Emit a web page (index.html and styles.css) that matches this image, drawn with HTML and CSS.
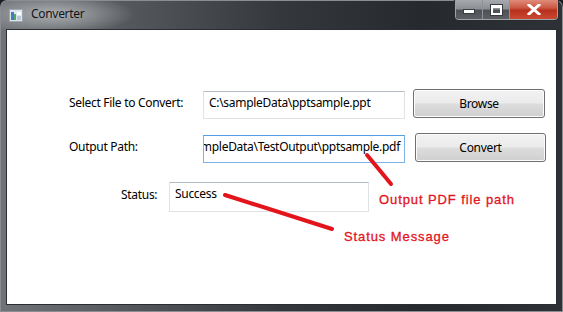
FILE: index.html
```html
<!DOCTYPE html>
<html>
<head>
<meta charset="utf-8">
<link rel="stylesheet" href="styles.css">
</head>
<body>
<div class="window">
  <div class="titlebar">
    <svg class="app-icon" width="14" height="13" viewBox="0 0 14 13">
      <rect x="0.5" y="0.5" width="13" height="12" fill="#dfe6ee" stroke="#9aa6b2"/>
      <rect x="2" y="3" width="3" height="8" fill="#3f7fb5"/>
      <rect x="5" y="5" width="2" height="6" fill="#5aa36a"/>
      <rect x="8" y="3" width="4" height="3" fill="#ffffff"/>
      <rect x="8" y="7" width="4" height="4" fill="#b9c7d6"/>
    </svg>
    <span class="title">Converter</span>
    <div class="caption-buttons">
      <div class="cap-btn cap-min"><span class="glyph-min"></span></div>
      <div class="cap-btn cap-max"><span class="glyph-max"></span></div>
      <div class="cap-btn cap-close">
        <svg width="14" height="11" viewBox="0 0 14 11"><path d="M2 1 L12 10 M12 1 L2 10" stroke="#ffffff" stroke-width="3" stroke-linecap="square"/></svg>
      </div>
    </div>
  </div>
  <div class="client">
    <div class="row row-file">
      <span class="label label-wide">Select File to Convert:</span>
      <div class="textbox tb-file"><span class="tb-text">C:\sampleData\pptsample.ppt</span></div>
      <div class="button btn-browse">Browse</div>
    </div>
    <div class="row row-out">
      <span class="label label-wide">Output Path:</span>
      <div class="textbox tb-out focused"><span class="tb-text">C:\sampleData\TestOutput\pptsample.pdf</span></div>
      <div class="button btn-convert">Convert</div>
    </div>
    <div class="row row-status">
      <span class="label label-status">Status:</span>
      <div class="textbox tb-status"><span class="tb-text">Success</span></div>
    </div>

    <svg class="annot-lines" width="549" height="274" viewBox="7 30 549 274">
      <path d="M368 156 L392 185" stroke="#e3141c" stroke-width="4" stroke-linecap="round"/>
      <path d="M226 196 L333 230" stroke="#e3141c" stroke-width="4" stroke-linecap="round"/>
    </svg>
    <span class="annot annot-pdf">Output PDF file path</span>
    <span class="annot annot-status">Status Message</span>
  </div>
</div>
</body>
</html>
```

FILE: styles.css
```css
html, body {
  margin: 0;
  padding: 0;
  background: #1c1f22;
}

body {
  width: 563px;
  height: 312px;
  overflow: hidden;
  font-family: "Noto Sans", "Open Sans", sans-serif;
}

.window {
  width: 563px;
  height: 312px;
  box-sizing: border-box;
  padding: 0 6px 7px 6px;
  display: flex;
  flex-direction: column;
  border-radius: 7px 7px 0 0;
  background:
    radial-gradient(ellipse 80px 20px at 55px 14px, rgba(200,202,204,0.75), rgba(200,202,204,0) 100%),
    linear-gradient(90deg, #707478 0%, #55595d 22%, #34383c 50%, #262a2e 75%, #2e3236 100%);
  box-shadow: inset 0 0 0 1px #8a8e92;
}

.titlebar {
  height: 29px;
  flex: none;
  display: flex;
  align-items: flex-start;
  position: relative;
}

.app-icon {
  margin: 9px 0 0 3px;
  flex: none;
}

.title {
  margin: 6px 0 0 8px;
  font-size: 12px;
  line-height: 16px;
  letter-spacing: -0.3px;
  color: #101418;
  font-family: "Noto Sans", sans-serif;
}

.caption-buttons {
  position: absolute;
  top: 0;
  right: -1px;
  display: flex;
  height: 19px;
  border: 1px solid #9da2a6;
  border-top: none;
  border-radius: 0 0 4px 4px;
  overflow: hidden;
  box-shadow: 0 0 0 1px #2a2d30;
}

.cap-btn {
  height: 19px;
  display: flex;
  align-items: center;
  justify-content: center;
  box-sizing: border-box;
}

.cap-min, .cap-max {
  width: 27px;
  background: linear-gradient(to bottom, #a6aaae 0%, #8c9094 45%, #4e5256 55%, #5d6165 100%);
  border-right: 1px solid #8f9397;
}

.glyph-min {
  display: block;
  width: 10px;
  height: 3px;
  margin-top: 4px;
  background: #ffffff;
  box-shadow: 0 0 0 1px #3a3d40;
}

.glyph-max {
  display: block;
  width: 7px;
  height: 5px;
  border: 2px solid #ffffff;
  border-top-width: 3px;
  box-shadow: 0 0 0 1px #3a3d40;
}

.cap-close {
  width: 47px;
  background: linear-gradient(to bottom, #e08b7c 0%, #cc5a44 40%, #b8301c 55%, #c94a32 100%);
}

.client {
  flex: 1;
  position: relative;
  background: #ffffff;
  border: 1px solid #2a2e32;
  padding: 59px 0 0 62px;
  font-size: 12px;
  letter-spacing: -0.3px;
  color: #000000;
}

.row {
  display: flex;
  align-items: flex-start;
  height: 30px;
}

.row-out {
  margin-top: 14px;
}

.row-status {
  margin-top: 19px;
}

.label {
  line-height: 28px;
  white-space: nowrap;
  color: #000000;
}

.label-wide {
  width: 134px;
  flex: none;
}

.label-status {
  margin-left: 52px;
  width: 48px;
  line-height: 26px;
  flex: none;
}

.textbox {
  box-sizing: border-box;
  height: 28px;
  margin-top: 2px;
  border: 1px solid #dfe3e8;
  border-top-color: #b5bcc4;
  background: #ffffff;
  padding: 3px 4px 0 5px;
  overflow: hidden;
  display: flex;
  line-height: 16px;
  white-space: nowrap;
  flex: none;
}

.tb-file {
  width: 202px;
}

.tb-out {
  width: 202px;
  justify-content: flex-end;
}

.tb-out.focused {
  border-color: #7eb4ea;
  border-top-color: #569de5;
}

.tb-status {
  width: 200px;
  height: 30px;
  margin-top: 0;
}

.tb-text {
  flex: none;
}

.button {
  box-sizing: border-box;
  height: 29px;
  border: 1px solid #707070;
  border-radius: 3px;
  background: linear-gradient(to bottom, #f2f2f2 0%, #ebebeb 48%, #dddddd 52%, #cfcfcf 100%);
  box-shadow: inset 0 0 0 1px #fcfcfc;
  display: flex;
  align-items: center;
  justify-content: center;
  line-height: 16px;
  color: #000000;
  flex: none;
}

.btn-browse {
  width: 132px;
  margin-left: 8px;
}

.btn-convert {
  width: 131px;
  margin-left: 10px;
}

.annot-lines {
  position: absolute;
  left: -1px;
  top: -1px;
  pointer-events: none;
}

.annot {
  position: absolute;
  color: #e3141c;
  font-family: "Liberation Sans", sans-serif;
  font-size: 13px;
  line-height: 14px;
  letter-spacing: 0.9px;
  white-space: nowrap;
  -webkit-text-stroke: 0.3px #e3141c;
}

.annot-pdf {
  left: 372px;
  top: 163px;
}

.annot-status {
  left: 337px;
  top: 200px;
}
```
